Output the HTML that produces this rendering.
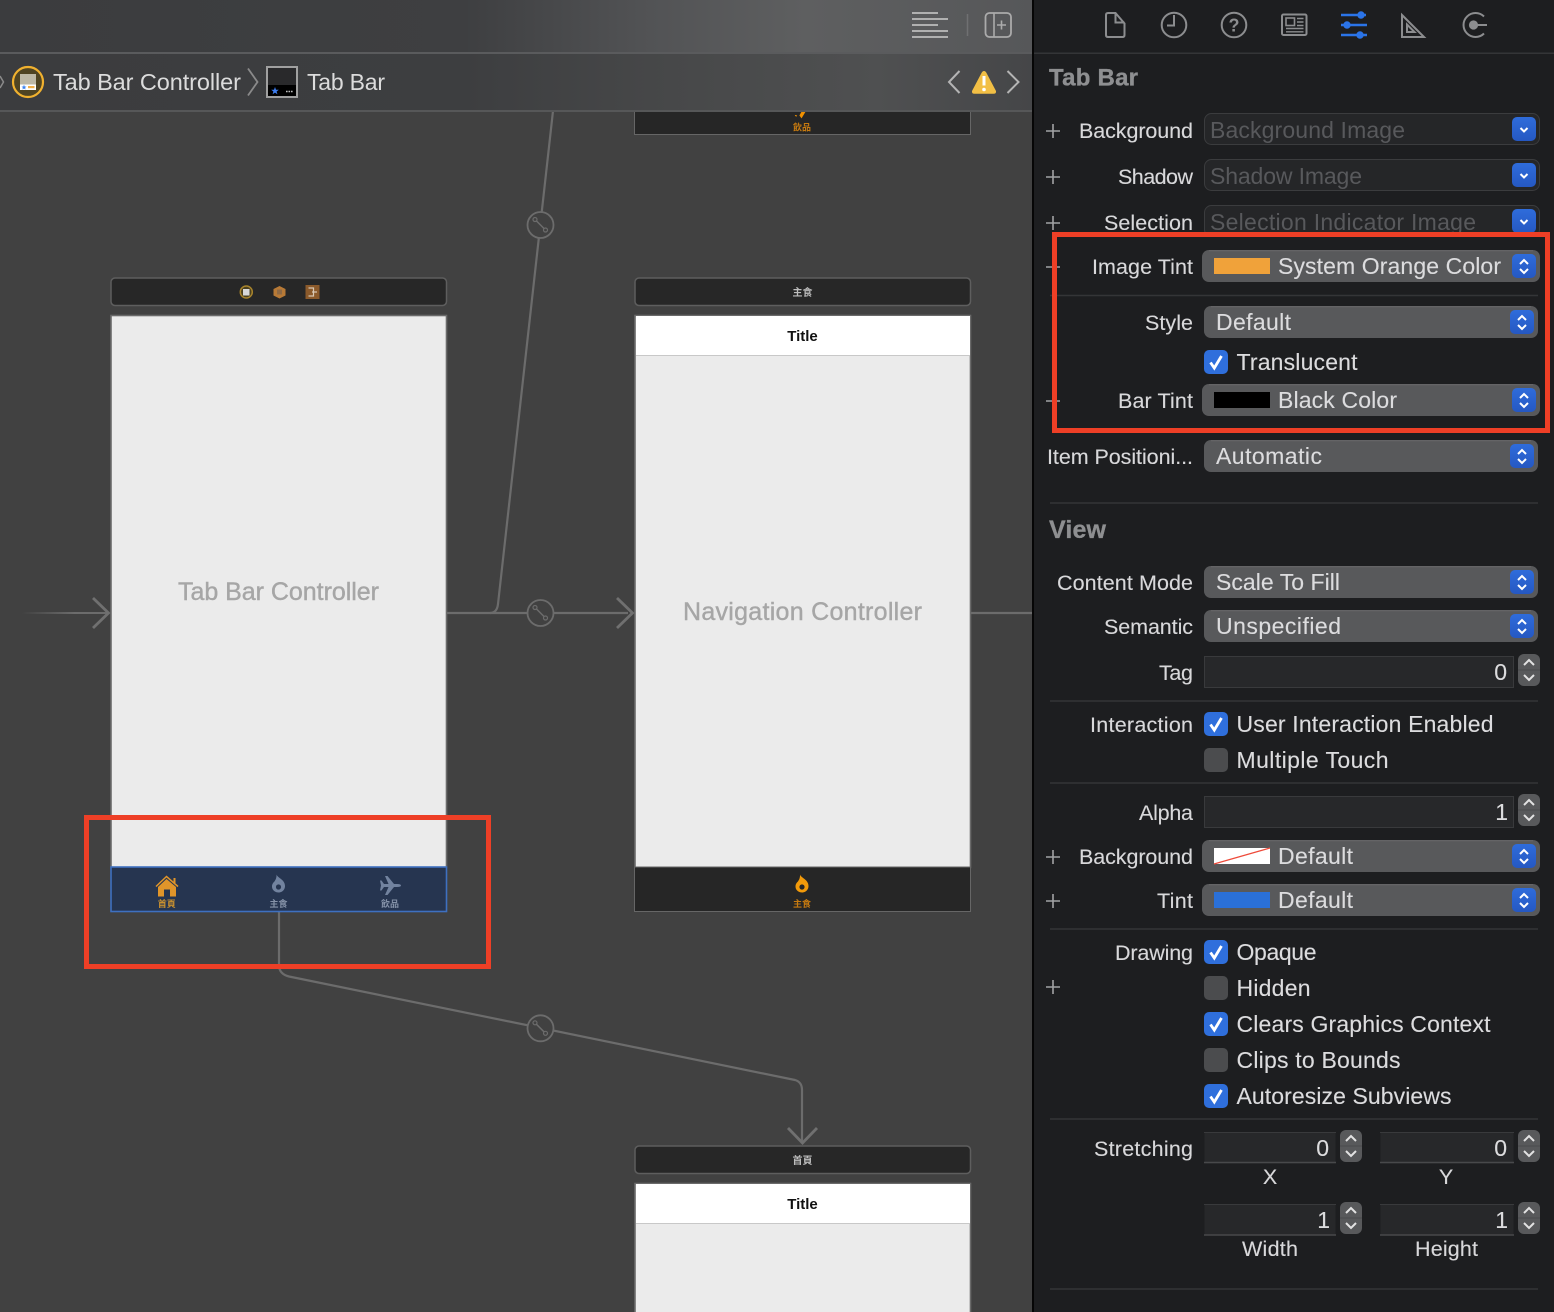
<!DOCTYPE html>
<html><head><meta charset="utf-8"><title>Tab Bar</title>
<style>
html,body{margin:0;padding:0;background:#1d1e20}
svg{display:block;position:absolute;left:0;top:0}
text{font-family:"Liberation Sans","Noto Sans CJK TC",sans-serif}
.l{font-size:21.5px;fill:#d8d8da;stroke:#d8d8da;stroke-width:.12}
.v{font-size:23px;fill:#dcdcde;stroke:#dcdcde;stroke-width:.12}
.d{font-size:23px;fill:#58595c}
.h{font-weight:bold;fill:#8e8f91;stroke:#8e8f91;stroke-width:.35}
.c{font-size:9px;font-weight:bold;text-anchor:middle}
.t{font-size:15px;font-weight:bold;fill:#111;text-anchor:middle}
.sc{font-size:25px;fill:#a6a6a6;stroke:#a6a6a6;stroke-width:.4}
.seg{fill:none;stroke:#6c6c6c;stroke-width:2.200}
.arr{fill:none;stroke:#707070;stroke-width:2.800}
.ic{fill:none;stroke:#8c8d8f;stroke-width:2}
.pl{stroke:#a2a3a5;stroke-width:1.6;fill:none}
.dv{stroke:#343537;stroke-width:1.5}
</style></head>
<body>
<svg width="1554" height="1312" viewBox="0 0 1554 1312" xmlns="http://www.w3.org/2000/svg">
<defs>
<linearGradient id="tb" gradientUnits="userSpaceOnUse" x1="0" x2="1032" y1="0" y2="0">
<stop offset="0" stop-color="#3b3c3e"/><stop offset=".45" stop-color="#3e3f41"/><stop offset=".63" stop-color="#525355"/><stop offset=".78" stop-color="#5e5f60"/><stop offset="1" stop-color="#565759"/>
</linearGradient>
<linearGradient id="tb2" gradientUnits="userSpaceOnUse" x1="0" x2="1032" y1="0" y2="0">
<stop offset="0" stop-color="#3b3c3e"/><stop offset=".45" stop-color="#3d3e40"/><stop offset=".65" stop-color="#474849"/><stop offset=".85" stop-color="#4f5051"/><stop offset="1" stop-color="#454648"/>
</linearGradient>
<linearGradient id="fade" gradientUnits="userSpaceOnUse" x1="22" x2="75" y1="0" y2="0"><stop offset="0" stop-color="#6c6c6c" stop-opacity="0"/><stop offset="1" stop-color="#6c6c6c"/></linearGradient>
<linearGradient id="bl" x1="0" x2="0" y1="0" y2="1"><stop offset="0" stop-color="#2f6cdb"/><stop offset="1" stop-color="#2558c2"/></linearGradient>
<g id="updn"><rect width="24" height="24" rx="5" fill="url(#bl)"/><path d="M8 10l4-4 4 4M8 15l4 4 4-4" fill="none" stroke="#fff" stroke-width="2"/></g>
<g id="dn"><rect width="24" height="24" rx="5" fill="url(#bl)"/><path d="M8.500 11l3.500 3.500 3.500-3.500" fill="none" stroke="#fff" stroke-width="2"/></g>
<g id="stp"><rect width="22" height="32" rx="6" fill="#58595b"/><path d="M0 16h22" stroke="#4a4b4d"/><path d="M6 11l5-5 5 5M6 21l5 5 5-5" fill="none" stroke="#e2e2e2" stroke-width="2"/></g>
<g id="chk"><rect width="24" height="24" rx="5" fill="#2f6fdc"/><path d="M6.500 12.500l3.800 5.500 7.200-12" fill="none" stroke="#fff" stroke-width="2.800"/></g>
<g id="unc"><rect width="24" height="24" rx="5" fill="#4b4c4e"/></g>
<g id="pop"><rect width="334" height="32" rx="7" fill="#58595b"/><path d="M7 .7h320" stroke="#68696b"/></g>
<g id="cpop"><rect width="338" height="32" rx="7" fill="#58595b"/><path d="M7 .7h324" stroke="#68696b"/></g>
<g id="dpop"><rect x=".5" y=".5" width="335" height="31" rx="7" fill="#252628" stroke="#3b3c3e"/></g>
<g id="plus"><path class="pl" d="M0 7h14M7 0v14"/></g>
<g id="seg"><circle r="13" fill="#414141" stroke="#6c6c6c" stroke-width="1.800"/><path d="M-4.500-4.500L4.500 4.500" stroke="#6c6c6c" stroke-width="1.500"/><circle cx="-5.500" cy="-5.500" r="2" fill="#414141" stroke="#6c6c6c" stroke-width="1.200"/><circle cx="5" cy="5" r="2" fill="#414141" stroke="#6c6c6c" stroke-width="1.200"/></g>
<path id="flame" d="M-2-9.500C-1-6 6.500-4.500 6.500 2 6.500 6 3.300 8.500 0 8.500-3.700 8.500-6.500 5.800-6.500 2.500-6.500-.2-5-1.400-4-2.600-3-4-1.800-6-2-9.500Z"/>
</defs>

<!-- canvas -->
<rect x="0" y="0" width="1032" height="1312" fill="#414141"/>

<!-- segues -->
<path d="M447 613H628" class="seg"/>
<path d="M490 613Q497 613 498 604L553 111" class="seg"/>
<path d="M971 613H1032" class="seg"/>
<rect x="22" y="612" width="86" height="2" fill="url(#fade)"/>
<path d="M93 598L108.500 613 93 628" class="arr"/>
<path d="M617 598L632.500 613 617 628" class="arr"/>
<path d="M279 912V965Q279 974 289 976.500L795 1080Q802 1082 802 1090V1143" class="seg"/>
<path d="M788 1128L802.500 1143 817 1128" class="arr"/>
<use href="#seg" x="540.500" y="225"/>
<use href="#seg" x="540.500" y="613"/>
<use href="#seg" x="540.500" y="1028.300"/>

<!-- top stub scene -->
<rect x="634.500" y="100" width="336" height="34.500" fill="#262626" stroke="#666"/>
<path d="M795 115.500l2 .5M806 110l-4.500 7.500-1.500-2 3-5.500z" fill="#f09000" stroke="#f09000" stroke-width="1"/>
<text x="802" y="130.500" class="c" fill="#c67a10">飲品</text>

<!-- Tab bar controller scene -->
<rect x="111" y="278" width="335.500" height="27.500" rx="4" fill="#272727" stroke="#5e5e5e" stroke-width="1.500"/>
<circle cx="246.300" cy="292" r="6" fill="#4a4020" stroke="#a8842c" stroke-width="1.500"/>
<rect x="243" y="289" width="6.500" height="6.500" fill="#d8d8d8"/>
<path d="M279.500 286l6 3v6.500l-6 3-6-3V289z" fill="#b87a36"/><rect x="277" y="289.500" width="5" height="5" fill="#8f6a45"/>
<rect x="305.500" y="285" width="14" height="14" fill="#8b5a2b"/><path d="M308.500 288h5v8h-5M312 292h5" fill="none" stroke="#d8c8b4" stroke-width="1.200"/>
<rect x="111" y="315.500" width="335.500" height="552" fill="#ebebeb" stroke="#6a6a6a" stroke-width="1.600"/>
<text x="178" y="600" class="sc" textLength="201">Tab Bar Controller</text>
<rect x="111" y="867" width="335.500" height="44.500" fill="#263550" stroke="#3e70c0" stroke-width="1.600"/>
<path d="M156 886.500L166.500 876.500 178 886.500" fill="none" stroke="#e0952a" stroke-width="1.500"/>
<path d="M158 887L166.500 879 176 887V896.500H170V889.500H164V896.500H158Z" fill="#e0952a"/>
<path d="M173.500 878h2v5h-2z" fill="#e0952a"/>
<text x="166.800" y="907" class="c" fill="#c8902f">首頁</text>
<use href="#flame" x="278.500" y="884" fill="#72839f"/>
<circle cx="278.500" cy="887" r="2.600" fill="#263550"/>
<text x="278.500" y="907" class="c" fill="#8592a8">主食</text>
<path d="M401 885.500Q401 884 397 884H394L387.500 876H385L388.500 884H384L381.500 880.500H380L381 885.500 380 890.500H381.500L384 887H388.500L385 895H387.500L394 887H397Q401 887 401 885.500Z" fill="#72839f"/>
<text x="390" y="907" class="c" fill="#8592a8">飲品</text>

<!-- Navigation controller scene -->
<rect x="635" y="278" width="335.500" height="27.500" rx="4" fill="#272727" stroke="#5e5e5e" stroke-width="1.500"/>
<text x="802.500" y="296" class="c" style="font-size:10px" fill="#bdbdbd">主食</text>
<rect x="635" y="315.500" width="335.500" height="552" fill="#ebebeb" stroke="#6a6a6a" stroke-width="1.600"/>
<rect x="636" y="316" width="334" height="39" fill="#fff"/>
<path d="M636 355.500H970" stroke="#c8c8c8"/>
<text x="802.500" y="341" class="t">Title</text>
<text x="683" y="620" class="sc" textLength="239">Navigation Controller</text>
<rect x="634.500" y="867" width="336" height="44.500" fill="#262626" stroke="#666"/>
<use href="#flame" x="802" y="884" fill="#f29a0a"/>
<circle cx="802" cy="887" r="2.600" fill="#262626"/>
<text x="802" y="907" class="c" fill="#c67a10">主食</text>

<!-- Bottom scene -->
<rect x="635" y="1146" width="335.500" height="27.500" rx="4" fill="#272727" stroke="#5e5e5e" stroke-width="1.500"/>
<text x="802.500" y="1164" class="c" style="font-size:10px" fill="#bdbdbd">首頁</text>
<rect x="635" y="1183.500" width="335.500" height="140" fill="#ebebeb" stroke="#6a6a6a" stroke-width="1.600"/>
<rect x="636" y="1184" width="334" height="39" fill="#fff"/>
<path d="M636 1223.500H970" stroke="#c8c8c8"/>
<text x="802.500" y="1209" class="t">Title</text>

<!-- toolbar + breadcrumb -->
<rect x="0" y="0" width="1032" height="52" fill="url(#tb)"/>
<rect x="0" y="54" width="1032" height="56" fill="url(#tb2)"/>
<rect x="0" y="52" width="1032" height="2" fill="#5a5b5d"/>
<rect x="0" y="110" width="1032" height="2" fill="#565758"/>
<path d="M912 13h26M912 19h36M912 25h26M912 31h36M912 37h36" stroke="#b0b0b0" stroke-width="2" fill="none"/>
<path d="M967.500 14v22" stroke="#6f7072" stroke-width="1.500"/>
<rect x="985.500" y="13" width="25.500" height="24" rx="4" fill="none" stroke="#ababab" stroke-width="1.800"/>
<path d="M994 13v24M997 25h9M1001.500 20.500v9" stroke="#ababab" stroke-width="1.600" fill="none"/>
<path d="M0 76l3.500 6-3.500 6" fill="none" stroke="#8a8a8a" stroke-width="1.500"/>
<circle cx="28" cy="82" r="15" fill="#4f4423" stroke="#f0b12f" stroke-width="2.200"/>
<rect x="20" y="74" width="16" height="10.500" fill="#bdb8a6"/><rect x="20" y="84.500" width="16" height="5.500" fill="#fff"/>
<path d="M24 84.800l.7 1.700 1.800.1-1.400 1.100.5 1.800-1.600-1-1.600 1 .5-1.800-1.400-1.100 1.800-.1z" fill="#3c82f0"/><rect x="28" y="86" width="6.500" height="2.200" fill="#f2b04a"/>
<text x="53" y="90" font-size="23.500" fill="#dcdcdc" textLength="188">Tab Bar Controller</text>
<path d="M248 68.500L257.500 82 248 95.500" fill="none" stroke="#8a8a8a" stroke-width="1.800"/>
<rect x="267" y="67" width="30" height="30" fill="#29292b" stroke="#a0a0a0" stroke-width="2"/>
<rect x="268" y="85" width="28" height="11" fill="#000"/>
<path d="M275 87l1 2.700 2.800.1-2.200 1.700.8 2.700-2.400-1.600-2.400 1.600.8-2.700-2.200-1.700 2.800-.1z" fill="#3c7cf0"/>
<path d="M286 91.500h1.600M288.500 91.500h1.600M291 91.500h1.600" stroke="#c0c0c0" stroke-width="1.400"/>
<text x="307" y="90" font-size="23" fill="#dcdcdc" textLength="78">Tab Bar</text>
<path d="M959.500 71L949 82 959.500 93" fill="none" stroke="#b4b4b4" stroke-width="2"/>
<path d="M984 71q1.500 0 2.500 2L996 91q.5 2.800-2.500 2.800h-19q-3 0-2.500-2.800l9.500-18q1-2 2.500-2z" fill="#f2bf45"/>
<path d="M984 76v9.500" stroke="#fff" stroke-width="3"/><circle cx="984" cy="89.500" r="1.800" fill="#fff"/>
<path d="M1007.500 71L1018.500 82 1007.500 93" fill="none" stroke="#b4b4b4" stroke-width="2"/>

<!-- inspector -->
<rect x="1032" y="0" width="2" height="1312" fill="#060606"/>
<rect x="1034" y="0" width="520" height="1312" fill="#1d1e20"/>
<rect x="1034" y="52.500" width="520" height="1.500" fill="#343537"/>
<path class="ic" d="M1108 13h7.500l9 10.500V35q0 2-2 2h-14.500q-2 0-2-2V15q0-2 2-2z M1115.500 13.500V22.500h9"/>
<circle class="ic" cx="1174" cy="25" r="12.300"/><path class="ic" d="M1174 15v10.500h-7" stroke-width="1.800"/>
<circle class="ic" cx="1234" cy="25" r="12.300"/>
<text x="1234" y="31.500" font-size="18" font-weight="bold" fill="#8c8d8f" text-anchor="middle">?</text>
<rect class="ic" x="1282" y="14.500" width="24.500" height="20.500" rx="1.500"/>
<rect x="1286" y="18" width="8.500" height="7.500" fill="none" stroke="#8c8d8f" stroke-width="1.600"/>
<path d="M1297 18.500h6.500M1297 22h6.500M1297 25.500h6.500M1286 28.500h17.500M1286 31.800h17.500" stroke="#8c8d8f" stroke-width="1.400"/>
<path d="M1341 15h25M1341 25h26M1341 35h26" stroke="#2b74e8" stroke-width="2.400"/>
<circle cx="1361" cy="15" r="3.700" fill="#2b74e8"/><circle cx="1347" cy="25" r="3.700" fill="#2b74e8"/><circle cx="1360" cy="35" r="3.700" fill="#2b74e8"/>
<path class="ic" d="M1402 15L1424 37H1402Z"/>
<path d="M1407 24.500L1414.500 32H1407Z" fill="none" stroke="#8c8d8f" stroke-width="2"/>
<path class="ic" d="M1484 16.500a12 12 0 1 0 0 17"/><circle cx="1473.500" cy="25" r="4.600" fill="#8c8d8f"/><path class="ic" d="M1473 25h14"/>

<text x="1049" y="85.500" class="h" style="font-size:24px" textLength="89">Tab Bar</text>

<!-- dim popups -->
<use href="#dpop" x="1204" y="113"/><use href="#dn" x="1512" y="117"/>
<use href="#dpop" x="1204" y="159"/><use href="#dn" x="1512" y="163"/>
<use href="#dpop" x="1204" y="205"/><use href="#dn" x="1512" y="209"/>
<use href="#plus" x="1046" y="124"/><use href="#plus" x="1046" y="170"/><use href="#plus" x="1046" y="216"/>
<use href="#plus" x="1046" y="260"/><use href="#plus" x="1046" y="394"/>
<text x="1079" y="138" class="l" textLength="114">Background</text>
<text x="1118" y="184" class="l" textLength="75">Shadow</text>
<text x="1104" y="230" class="l" textLength="89">Selection</text>
<text x="1210" y="138" class="d" textLength="195">Background Image</text>
<text x="1210" y="184" class="d" textLength="152">Shadow Image</text>
<text x="1210" y="230" class="d" textLength="266">Selection Indicator Image</text>

<!-- Image tint etc -->
<use href="#cpop" x="1202" y="250"/><use href="#updn" x="1512" y="254"/>
<rect x="1214" y="258" width="56" height="16" fill="#f0a23a"/>
<text x="1092" y="274" class="l" textLength="101">Image Tint</text>
<text x="1278" y="274" class="v" textLength="223">System Orange Color</text>
<path d="M1050 295.500H1538" class="dv"/>
<use href="#pop" x="1204" y="306"/><use href="#updn" x="1510" y="310"/>
<text x="1145" y="330" class="l" textLength="48">Style</text>
<text x="1216" y="330" class="v" textLength="75">Default</text>
<use href="#chk" x="1204" y="350"/>
<text x="1236.500" y="370" class="v" textLength="121">Translucent</text>
<use href="#cpop" x="1202" y="384"/><use href="#updn" x="1512" y="388"/>
<rect x="1214" y="392" width="56" height="16" fill="#000"/>
<text x="1118" y="408" class="l" textLength="75">Bar Tint</text>
<text x="1278" y="408" class="v" textLength="119">Black Color</text>
<use href="#pop" x="1204" y="440"/><use href="#updn" x="1510" y="444"/>
<text x="1047" y="464" class="l" textLength="146">Item Positioni...</text>
<text x="1216" y="464" class="v" textLength="106">Automatic</text>
<path d="M1050 503H1538" class="dv"/>

<!-- View -->
<text x="1049" y="538" class="h" style="font-size:25px" textLength="57">View</text>
<use href="#pop" x="1204" y="566"/><use href="#updn" x="1510" y="570"/>
<text x="1057" y="590" class="l" textLength="136">Content Mode</text>
<text x="1216" y="590" class="v" textLength="124">Scale To Fill</text>
<use href="#pop" x="1204" y="610"/><use href="#updn" x="1510" y="614"/>
<text x="1104" y="634" class="l" textLength="89">Semantic</text>
<text x="1216" y="634" class="v" textLength="125">Unspecified</text>
<rect x="1204.500" y="656.500" width="309" height="31" fill="#27282a" stroke="#393a3c"/>
<use href="#stp" x="1518" y="654"/>
<text x="1159" y="680" class="l" textLength="34">Tag</text>
<text x="1507" y="680" class="v" text-anchor="end">0</text>
<path d="M1050 701H1538" class="dv"/>
<text x="1090" y="732" class="l" textLength="103">Interaction</text>
<use href="#chk" x="1204" y="712"/>
<text x="1236.500" y="732" class="v" textLength="257">User Interaction Enabled</text>
<use href="#unc" x="1204" y="748"/>
<text x="1236.500" y="768" class="v" textLength="152">Multiple Touch</text>
<path d="M1050 783H1538" class="dv"/>
<rect x="1204.500" y="796.500" width="309" height="31" fill="#27282a" stroke="#393a3c"/>
<use href="#stp" x="1518" y="794"/>
<text x="1139" y="820" class="l" textLength="54">Alpha</text>
<text x="1508" y="820" class="v" text-anchor="end">1</text>
<use href="#cpop" x="1202" y="840"/><use href="#updn" x="1512" y="844"/>
<use href="#plus" x="1046" y="850"/>
<rect x="1214" y="848" width="56" height="16" fill="#fff"/>
<path d="M1214 864L1270 848" stroke="#ee4a3a" stroke-width="1.200"/>
<text x="1079" y="864" class="l" textLength="114">Background</text>
<text x="1278" y="864" class="v" textLength="75">Default</text>
<use href="#cpop" x="1202" y="884"/><use href="#updn" x="1512" y="888"/>
<use href="#plus" x="1046" y="894"/>
<rect x="1214" y="892" width="56" height="16" fill="#2a70d8"/>
<text x="1157" y="908" class="l" textLength="36">Tint</text>
<text x="1278" y="908" class="v" textLength="75">Default</text>
<path d="M1050 929H1538" class="dv"/>
<text x="1115" y="960" class="l" textLength="78">Drawing</text>
<use href="#chk" x="1204" y="940"/>
<text x="1236.500" y="960" class="v" textLength="80">Opaque</text>
<use href="#plus" x="1046" y="980"/>
<use href="#unc" x="1204" y="976"/>
<text x="1236.500" y="996" class="v" textLength="74">Hidden</text>
<use href="#chk" x="1204" y="1012"/>
<text x="1236.500" y="1032" class="v" textLength="254">Clears Graphics Context</text>
<use href="#unc" x="1204" y="1048"/>
<text x="1236.500" y="1068" class="v" textLength="164">Clips to Bounds</text>
<use href="#chk" x="1204" y="1084"/>
<text x="1236.500" y="1104" class="v" textLength="215">Autoresize Subviews</text>
<path d="M1050 1119H1538" class="dv"/>

<text x="1094" y="1156" class="l" textLength="99">Stretching</text>
<rect x="1204.500" y="1132.500" width="131" height="31" fill="#27282a"/><path d="M1204 1162.500H1336" stroke="#48494b" stroke-width="1.500"/><path d="M1204 1132.500H1336" stroke="#393a3c"/>
<use href="#stp" x="1340" y="1130"/>
<text x="1329" y="1156" class="v" text-anchor="end">0</text>
<rect x="1380.500" y="1132.500" width="133" height="31" fill="#27282a"/><path d="M1380 1162.500H1514" stroke="#48494b" stroke-width="1.500"/><path d="M1380 1132.500H1514" stroke="#393a3c"/>
<use href="#stp" x="1518" y="1130"/>
<text x="1507" y="1156" class="v" text-anchor="end">0</text>
<text x="1270" y="1184" class="l" text-anchor="middle">X</text>
<text x="1446" y="1184" class="l" text-anchor="middle">Y</text>
<rect x="1204.500" y="1204.500" width="131" height="31" fill="#27282a"/><path d="M1204 1235H1336" stroke="#48494b" stroke-width="1.500"/><path d="M1204 1204.500H1336" stroke="#393a3c"/>
<use href="#stp" x="1340" y="1202"/>
<text x="1330" y="1228" class="v" text-anchor="end">1</text>
<rect x="1380.500" y="1204.500" width="133" height="31" fill="#27282a"/><path d="M1380 1235H1514" stroke="#48494b" stroke-width="1.500"/><path d="M1380 1204.500H1514" stroke="#393a3c"/>
<use href="#stp" x="1518" y="1202"/>
<text x="1508" y="1228" class="v" text-anchor="end">1</text>
<text x="1242" y="1256" class="l" textLength="56">Width</text>
<text x="1415" y="1256" class="l" textLength="63">Height</text>
<path d="M1050 1289H1538" class="dv"/>

<!-- red annotation boxes -->
<rect x="86.500" y="817.500" width="402" height="149" fill="none" stroke="#ee3f26" stroke-width="5"/>
<rect x="1054.500" y="234.500" width="493" height="196" fill="none" stroke="#ee3f26" stroke-width="5"/>
</svg>
</body></html>
